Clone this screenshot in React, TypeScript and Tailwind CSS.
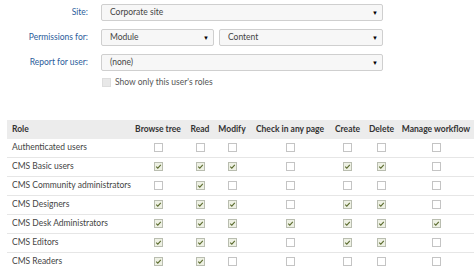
import React from "react";

/* ─── Data ────────────────────────────────────────────────── */

const COLUMNS = [
  "Browse tree",
  "Read",
  "Modify",
  "Check in any page",
  "Create",
  "Delete",
  "Manage workflow",
];

const COL_WIDTHS = ["w-[56px]", "w-[28px]", "w-[36px]", "w-[80px]", "w-[35px]", "w-[33px]", "w-[76px]"];

const ROLES: { name: string; perms: number[] }[] = [
  { name: "Authenticated users", perms: [0, 0, 0, 0, 0, 0, 0] },
  { name: "CMS Basic users", perms: [1, 1, 1, 0, 1, 1, 0] },
  { name: "CMS Community administrators", perms: [0, 1, 0, 0, 0, 0, 0] },
  { name: "CMS Designers", perms: [1, 1, 1, 0, 1, 1, 0] },
  { name: "CMS Desk Administrators", perms: [1, 1, 1, 1, 1, 1, 1] },
  { name: "CMS Editors", perms: [1, 1, 1, 0, 1, 1, 0] },
  { name: "CMS Readers", perms: [1, 1, 0, 0, 0, 0, 0] },
];

/* ─── Bits ────────────────────────────────────────────────── */

function Box({ checked }: { checked: boolean }) {
  return (
    <span
      className={`flex h-[9px] w-[9px] items-center justify-center border ${
        checked ? "border-[#b9bdb0] bg-[#eef1e4]" : "border-[#c4c4c4] bg-white"
      }`}
    >
      {checked && (
        <svg width="7" height="7" viewBox="0 0 7 7">
          <path d="M1.2 3.6 L2.8 5.1 L5.8 1.8" fill="none" stroke="#5b6b2e" strokeWidth="1.1" />
        </svg>
      )}
    </span>
  );
}

function Select({ value, width }: { value: string; width: string }) {
  return (
    <div
      className={`flex h-[17px] ${width} items-center justify-between rounded-[2px] border border-[#cfcfcf] bg-[#f7f7f7] pl-[8px] pr-[4px] text-[#444]`}
    >
      <span>{value}</span>
      <span className="text-[6px] leading-none text-black">▼</span>
    </div>
  );
}

function Label({ children }: { children: React.ReactNode }) {
  return <div className="w-[89px] pr-[1px] text-right text-[#2b5d9b]">{children}</div>;
}

/* ─── Page ────────────────────────────────────────────────── */

export default function App() {
  return (
    <div
      className="h-[269px] w-[474px] overflow-hidden bg-white text-[8.5px] text-[#444]"
      style={{ fontFamily: "Lato, 'Open Sans', sans-serif" }}
    >
      {/* ── Filters ── */}
      <div className="flex flex-col gap-[8px] pt-[4px]">
        <div className="flex items-center gap-[12px]">
          <Label>Site:</Label>
          <Select value="Corporate site" width="w-[282px]" />
        </div>
        <div className="flex items-center gap-[12px]">
          <Label>Permissions for:</Label>
          <div className="flex gap-[5px]">
            <Select value="Module" width="w-[113px]" />
            <Select value="Content" width="w-[164px]" />
          </div>
        </div>
        <div className="flex items-center gap-[12px]">
          <Label>Report for user:</Label>
          <Select value="(none)" width="w-[282px]" />
        </div>
        <div className="-mt-[3px] flex items-center gap-[4px] pl-[102px] text-[#555]">
          <span className="h-[9px] w-[9px] border border-[#ddd] bg-[#e8e8e8]" />
          <span>Show only this user's roles</span>
        </div>
      </div>

      {/* ── Permission matrix ── */}
      <div className="ml-[7px] mt-[31px]">
        <div className="flex h-[19px] items-center bg-[#ececec] font-bold text-[#333]">
          <div className="w-[123px] pl-[5px]">Role</div>
          {COLUMNS.map((c, i) => (
            <div key={c} className={`${COL_WIDTHS[i]} whitespace-nowrap text-center`}>
              {c}
            </div>
          ))}
        </div>
        {ROLES.map((r) => (
          <div key={r.name} className="flex h-[19px] items-center border-b border-[#e6e6e6]">
            <div className="w-[123px] whitespace-nowrap pl-[5px]">{r.name}</div>
            {r.perms.map((p, i) => (
              <div key={i} className={`${COL_WIDTHS[i]} flex justify-center`}>
                <Box checked={p === 1} />
              </div>
            ))}
          </div>
        ))}
      </div>
    </div>
  );
}
